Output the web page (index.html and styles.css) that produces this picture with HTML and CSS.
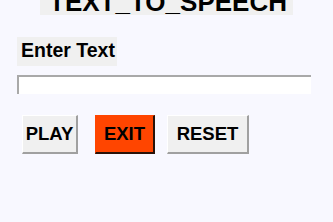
FILE: index.html
```html
<html><head>
<meta name="viewport" content="width=device-width, initial-scale=1">
<link rel="stylesheet" href="styles.css"></head><body>

<div class="window">
  <div class="titlebox"><h1 class="title">TEXT_TO_SPEECH</h1></div>

  <label for="msg" class="prompt">Enter Text</label>
  <input type="text" class="entry" id="msg" name="msg">

  <div class="actions">
    <button type="button" class="btn btnPlay">PLAY</button>
    <button type="button" class="btn btnExit">EXIT</button>
    <button type="button" class="btn btnReset">RESET</button>
  </div>
</div>

</body></html>
```
FILE: styles.css
```css
body {
    margin: 0;
    background-color: #f8f8ff;
    font-family: "Liberation Sans", Arial, Helvetica, sans-serif;
}
.window {
    width: 333px;
    height: 222px;
    overflow: hidden;
}

.titlebox {text-align: center;}
.title {
    display: inline-block;
    margin: -10px 0 0 0;
    padding: 0 6px 1px 9px;
    font-size: 26px;
    line-height: 24px;
    font-weight: bold;
    background-color: #f0f0f0;
}

.prompt {
    display: inline-block;
    margin: 22px 0 0 17px;
    padding: 0 2px 2px 4px;
    font-size: 19.5px;
    line-height: 27px;
    font-weight: bold;
    background-color: #f0f0f0;
}

.entry {
    display: block;
    width: 294px;
    height: 19px;
    margin: 9px 0 0 17px;
    padding: 0 2px;
    box-sizing: border-box;
    background-color: #fff;
    border: none;
    border-top: 2px solid #a9a9a9;
    border-left: 2px solid #a9a9a9;
    outline: none;
}

.actions {
    display: flex;
    margin: 21px 0 0 22px;
}
.btn {
    display: flex;
    align-items: center;
    justify-content: center;
    height: 39px;
    padding: 0;
    box-sizing: border-box;
    font-family: "Liberation Sans", Arial, sans-serif;
    font-size: 18.5px;
    font-weight: bold;
    color: #000;
    background-color: #f0f0f0;
    border-top: 1px solid #fff;
    border-left: 1px solid #fff;
    border-right: 2px solid #a0a0a0;
    border-bottom: 2px solid #a0a0a0;
    cursor: pointer;
}
.btnPlay {width: 56px;}
.btnExit {
    width: 60px;
    margin: 0 12px 0 17px;
    background-color: #ff4500;
    border-top-color: #ff4500;
    border-left-color: #ff4500;
    border-right-color: #2a1208;
    border-bottom-color: #2a1208;
}
.btnReset {width: 82px;}
```
